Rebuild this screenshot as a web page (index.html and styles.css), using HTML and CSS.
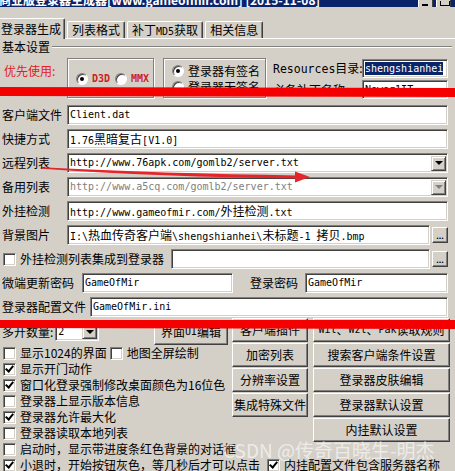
FILE: index.html
```html
<!DOCTYPE html>
<html lang="zh-CN">
<head>
    <meta charset="UTF-8">
    <meta name="viewport" content="width=device-width, initial-scale=1.0">
    <title>商业版登录器生成器</title>
    <link rel="stylesheet" href="styles.css">
</head>
<body>
    <div class="titlebar">
        <span class="title-text">商业版登录器生成器[www.gameofmir.com] [2015-11-08]</span>
        <div class="win-btns">
            <span class="win-btn"><span class="min-bar"></span></span>
            <span class="win-btn"><span class="max-box"></span></span>
        </div>
    </div>

    <div class="tabs">
        <div class="tab active">登录器生成</div>
        <div class="tab">列表格式</div>
        <div class="tab">补丁<span class="mono">MD5</span>获取</div>
        <div class="tab">相关信息</div>
    </div>

    <div class="panel">
        <div class="group-title"><span>基本设置</span></div>

        <div class="prefs">
            <div class="prefer-label">优先使用:</div>
            <div class="frame frame-render">
                <span class="radio on"></span><span class="red-opt">D3D</span>
                <span class="radio second"></span><span class="red-opt">MMX</span>
            </div>
            <div class="frame frame-sign">
                <div class="radio-row"><span class="radio on"></span>登录器有签名</div>
                <div class="radio-row"><span class="radio"></span>登录器无签名</div>
            </div>
            <div class="res-fields">
                <div class="res-row">
                    <span class="res-label"><span class="mono-l">Resources</span>目录:</span>
                    <div class="input"><span class="sel">shengshianhei</span></div>
                </div>
                <div class="res-row">
                    <span class="res-label">必备补丁名称:</span>
                    <div class="input">Newer1IT</div>
                </div>
            </div>
        </div>

        <div class="form">
            <div class="row">
                <span class="label">客户端文件</span>
                <div class="input">Client.dat</div>
            </div>
            <div class="row">
                <span class="label">快捷方式</span>
                <div class="input">1.76<span class="cn">黑暗复古</span>[V1.0]</div>
            </div>
            <div class="row">
                <span class="label">远程列表</span>
                <div class="input combo"><span class="val">http://www.76apk.com/gomlb2/server.txt</span><span class="drop"></span></div>
            </div>
            <div class="row">
                <span class="label">备用列表</span>
                <div class="input combo disabled"><span class="val">http://www.a5cq.com/gomlb2/server.txt</span><span class="drop"></span></div>
            </div>
            <div class="row">
                <span class="label">外挂检测</span>
                <div class="input">http://www.gameofmir.com/<span class="cn">外挂检测</span>.txt</div>
            </div>
            <div class="row">
                <span class="label">背景图片</span>
                <div class="input">I:\<span class="cn">热血传奇客户端</span>\shengshianhei\<span class="cn">未标题</span>-1 <span class="cn">拷贝</span>.bmp</div>
                <span class="btn dots">...</span>
            </div>
            <div class="row">
                <div class="check plug-check"><span class="chk"></span>外挂检测列表集成到登录器</div>
                <div class="input"></div>
                <span class="btn dots">...</span>
            </div>
            <div class="row">
                <span class="label auto">微端更新密码</span>
                <div class="input pwd">GameOfMir</div>
                <span class="label auto login-pwd">登录密码</span>
                <div class="input pwd2">GameOfMir</div>
            </div>
            <div class="row">
                <span class="label auto">登录器配置文件</span>
                <div class="input cfg">GameOfMir.ini</div>
            </div>
        </div>

        <div class="bottom">
            <div class="left">
                <div class="multi">
                    <span>多开数量:</span>
                    <div class="input combo small"><span class="val">2</span><span class="drop"></span></div>
                    <span class="btn ui-btn">界面<span class="mono">UI</span>编辑</span>
                </div>
                <div class="check-row">
                    <div class="check"><span class="chk"></span>显示1024的界面</div>
                    <div class="check map-check"><span class="chk"></span>地图全屏绘制</div>
                </div>
                <div class="check-row"><div class="check"><span class="chk on"></span>显示开门动作</div></div>
                <div class="check-row"><div class="check"><span class="chk on"></span>窗口化登录强制修改桌面颜色为16位色</div></div>
                <div class="check-row"><div class="check"><span class="chk"></span>登录器上显示版本信息</div></div>
                <div class="check-row"><div class="check"><span class="chk on"></span>登录器允许最大化</div></div>
                <div class="check-row"><div class="check"><span class="chk"></span>登录器读取本地列表</div></div>
                <div class="check-row"><div class="check"><span class="chk"></span>启动时，显示带进度条红色背景的对话框</div></div>
            </div>

            <div class="btn-col">
                <span class="btn">客户端插件</span>
                <span class="btn">加密列表</span>
                <span class="btn">分辨率设置</span>
                <span class="btn">集成特殊文件</span>
            </div>

            <div class="btn-col wide">
                <span class="btn"><span class="mono">Wil</span>、<span class="mono">Wzl</span>、<span class="mono">Pak</span>读取规则</span>
                <span class="btn">搜索客户端条件设置</span>
                <span class="btn">登录器皮肤编辑</span>
                <span class="btn">登录器默认设置</span>
                <span class="btn">内挂默认设置</span>
            </div>

            <div class="check-row last-row">
                <div class="check first"><span class="chk on"></span>小退时，开始按钮灰色，等几秒后才可以点击</div>
                <div class="check"><span class="chk on"></span>内挂配置文件包含服务器名称</div>
            </div>
        </div>
    </div>

    <!-- red annotation marks drawn over the screenshot -->
    <svg class="marks" viewBox="0 0 455 471" width="455" height="471">
        <polygon points="0,87 455,88 455,97 0,96" fill="#f40000"/>
        <polygon points="0,320 455,320 455,329 0,328" fill="#f40000"/>
        <path d="M42 167.3 Q160 173.5 298 175.4 L298 178.6 Q160 176.8 42 168.7 Z" fill="#e3262b"/>
        <polygon points="295,171.5 310,177 295,182.5" fill="#e3262b"/>
    </svg>
    <div class="watermark">CSDN @传奇百晓生-明杰</div>
</body>
</html>
```

FILE: styles.css
```css
body {
    margin: 0;
    width: 455px;
    height: 471px;
    overflow: hidden;
    position: relative;
    background-color: #d4d0c8;
    font-family: "Noto Sans CJK SC", sans-serif;
    font-size: 12px;
    line-height: 14px;
    color: #000;
}
.mono {
    font-family: "DejaVu Sans Mono", monospace;
    font-size: 10px;
}
.mono-l {
    font-family: "DejaVu Sans Mono", monospace;
    font-size: 11.5px;
}
.cn {
    font-family: "Noto Sans CJK SC", sans-serif;
    font-size: 12px;
}

/* title bar */
.titlebar {
    height: 7px;
    background-color: #0a246a;
    display: flex;
    justify-content: space-between;
    overflow: hidden;
}
.title-text {
    color: #fff;
    font-weight: bold;
    white-space: nowrap;
    margin-top: -7px;
    margin-left: -1px;
}
.win-btns {
    display: flex;
    gap: 3px;
    margin-right: 4px;
}
.win-btn {
    width: 15px;
    height: 7px;
    box-sizing: border-box;
    background-color: #d4d0c8;
    border-right: 1px solid #404040;
    border-left: 1px solid #fff;
    display: flex;
    align-items: flex-end;
    padding: 0 0 1px 3px;
}
.min-bar {
    width: 6px;
    height: 2px;
    background-color: #000;
}
.max-box {
    width: 8px;
    height: 4px;
    border: 1px solid #000;
    border-top: none;
}

/* tabs */
.tabs {
    margin-top: 11px;
    height: 20px;
    display: flex;
    align-items: flex-end;
}
.tab {
    height: 17px;
    box-sizing: border-box;
    padding: 0 4px;
    margin-right: 2px;
    line-height: 16px;
    border: 1px solid;
    border-color: #fff #404040 transparent #fff;
    border-bottom: none;
    border-radius: 2px 2px 0 0;
    box-shadow: inset -1px 0 #808080;
    white-space: nowrap;
}
.tab.active {
    position: relative;
    height: 21px;
    margin-left: -3px;
    margin-bottom: -1px;
    padding: 2px 3px 1px 3px;
    background-color: #d4d0c8;
}

.panel {
    border-top: 1px solid #fff;
}
.group-title {
    display: flex;
    align-items: center;
    height: 14px;
    margin-top: 1px;
    padding-left: 2px;
}
.group-title::after {
    content: "";
    flex: 1;
    margin: 0 3px 0 2px;
    border-top: 1px solid #808080;
    border-bottom: 1px solid #fff;
}

/* priority row */
.prefs {
    display: flex;
    margin-top: 4px;
    height: 40px;
}
.prefer-label {
    width: 63px;
    padding-left: 4px;
    margin-top: 6px;
    color: #e02020;
}
.frame {
    box-sizing: border-box;
    height: 40px;
    border: 1px solid #808080;
    box-shadow: inset 1px 1px #fff, 1px 1px #fff;
}
.frame-render {
    width: 87px;
    display: flex;
    align-items: center;
    padding: 2px 0 0 8px;
}
.red-opt {
    font-family: "DejaVu Sans Mono", monospace;
    font-weight: bold;
    font-size: 10px;
    color: #cc1f1f;
    margin-left: 4px;
}
.radio.second {
    margin-left: 5px;
}
.frame-sign {
    width: 103px;
    margin-left: 9px;
    padding: 4px 0 0 8px;
}
.radio-row {
    height: 16px;
    display: flex;
    align-items: center;
    gap: 4px;
    white-space: nowrap;
}
.radio {
    width: 12px;
    height: 12px;
    box-sizing: border-box;
    flex: none;
    border-radius: 50%;
    background-color: #fff;
    border: 1px solid;
    border-color: #808080 #fff #fff #808080;
    box-shadow: inset 1px 1px #404040;
    display: flex;
    align-items: center;
    justify-content: center;
}
.radio.on::after {
    content: "";
    width: 4px;
    height: 4px;
    border-radius: 50%;
    background-color: #000;
}
.res-fields {
    margin-left: 7px;
    padding-top: 1px;
    display: flex;
    flex-direction: column;
    gap: 2px;
}
.res-row {
    display: flex;
    align-items: center;
    height: 19px;
}
.res-label {
    width: 89px;
    white-space: nowrap;
}
.res-row .input {
    width: 86px;
    height: 19px;
    line-height: 17px;
}
.sel {
    background-color: #0a246a;
    color: #fff;
    padding: 1px 0;
}

/* inputs */
.input {
    box-sizing: border-box;
    height: 20px;
    padding: 0 2px;
    background-color: #fff;
    border: 1px solid;
    border-color: #808080 #fff #fff #808080;
    box-shadow: inset 1px 1px #404040, inset -1px -1px #d4d0c8;
    font-family: "DejaVu Sans Mono", "Noto Sans CJK SC", monospace;
    font-size: 10px;
    line-height: 18px;
    white-space: nowrap;
    overflow: hidden;
}
.combo {
    display: flex;
    align-items: center;
    padding-right: 1px;
}
.combo .val {
    flex: 1;
}
.combo.disabled .val {
    color: #808080;
}
.drop {
    width: 15px;
    height: 15px;
    box-sizing: border-box;
    flex: none;
    background-color: #d4d0c8;
    border: 1px solid;
    border-color: #d4d0c8 #404040 #404040 #d4d0c8;
    box-shadow: inset 1px 1px #fff, inset -1px -1px #808080;
    display: flex;
    align-items: center;
    justify-content: center;
}
.drop::after {
    content: "";
    border-left: 4px solid transparent;
    border-right: 4px solid transparent;
    border-top: 4px solid #000;
}
.disabled .drop::after {
    border-top-color: #808080;
}

/* form rows */
.form {
    margin-top: 7px;
    display: flex;
    flex-direction: column;
    gap: 4px;
}
.row {
    display: flex;
    align-items: center;
    height: 20px;
    padding-right: 7px;
}
.label {
    width: 65px;
    padding-left: 2px;
    white-space: nowrap;
}
.label.auto {
    width: auto;
}
.row .input {
    flex: 1;
}
.plug-check {
    padding-left: 3px;
}
.plug-check + .input {
    margin-left: 7px;
}
.row .input.pwd {
    flex: none;
    width: 151px;
    margin-left: 8px;
}
.login-pwd {
    margin-left: 17px;
    padding-left: 0;
}
.row .input.pwd2 {
    margin-left: 7px;
}
.row .input.cfg {
    margin-left: 4px;
}

.btn {
    box-sizing: border-box;
    display: flex;
    align-items: center;
    justify-content: center;
    background-color: #d4d0c8;
    border: 1px solid;
    border-color: #fff #404040 #404040 #fff;
    box-shadow: inset -1px -1px #808080;
    white-space: nowrap;
}
.dots {
    width: 16px;
    height: 16px;
    margin-left: 2px;
    font-family: "Liberation Sans", sans-serif;
    font-weight: bold;
    font-size: 9px;
    line-height: 8px;
    padding-top: 2px;
}

/* checkboxes */
.check {
    display: flex;
    align-items: center;
    gap: 4px;
    white-space: nowrap;
}
.chk {
    width: 13px;
    height: 13px;
    box-sizing: border-box;
    flex: none;
    background-color: #fff;
    border: 1px solid;
    border-color: #808080 #fff #fff #808080;
    box-shadow: inset 1px 1px #404040, inset -1px -1px #d4d0c8;
    display: flex;
    align-items: center;
    justify-content: center;
}
.chk.on::after {
    content: "";
    width: 3px;
    height: 6px;
    margin-top: -2px;
    border: solid #000;
    border-width: 0 2px 2px 0;
    transform: rotate(40deg);
}

/* lower part */
.bottom {
    margin-top: 1px;
    display: grid;
    grid-template-columns: 232px 76px 142px;
    align-items: start;
}
.multi {
    display: flex;
    align-items: center;
    height: 27px;
    padding-left: 2px;
}
.multi .small {
    width: 44px;
    height: 18px;
    margin-left: 2px;
}
.ui-btn {
    width: 74px;
    height: 25px;
    margin-left: auto;
    margin-right: 4px;
    margin-top: 1px;
}
.check-row {
    display: flex;
    align-items: center;
    height: 16px;
    padding-left: 3px;
}
.map-check {
    margin-left: 3px;
}
.btn-col {
    display: flex;
    flex-direction: column;
    gap: 1px;
}
.btn-col .btn {
    height: 24px;
}
.btn-col.wide {
    padding-left: 5px;
}
.last-row {
    grid-column: 1 / -1;
}
.last-row .first {
    width: 264px;
}

/* overlay */
.marks {
    position: absolute;
    left: 0;
    top: 0;
    pointer-events: none;
}
.watermark {
    position: absolute;
    left: 223px;
    top: 440px;
    font-size: 19px;
    line-height: 19px;
    color: rgba(255, 255, 255, 0.6);
    white-space: nowrap;
}
```
